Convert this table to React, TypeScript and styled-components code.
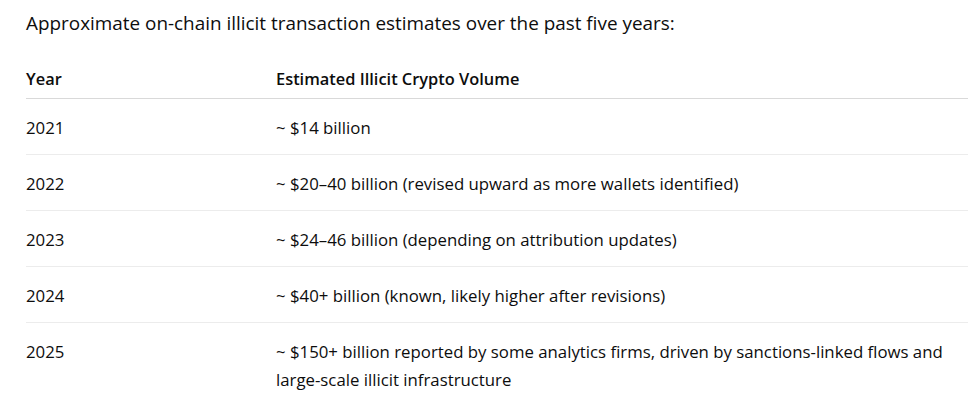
import React from "react";
import styled, { createGlobalStyle } from "styled-components";

const Global = createGlobalStyle`
  html, body { margin: 0; padding: 0; background: #ffffff; }
  body { font-family: "Open Sans", "Noto Sans", sans-serif; color: #0d0d0d; }
`;

const Page = styled.div`
  padding: 8px 0 0 26px;
  width: 968px;
  box-sizing: border-box;
`;

const Intro = styled.p`
  margin: 0 0 22px 0;
  font-size: 18.9px;
  line-height: 30px;
`;

const Table = styled.table`
  width: 100%;
  border-collapse: collapse;
  font-size: 16.8px;
  line-height: 28px;
`;

const Th = styled.th<{ $first?: boolean }>`
  text-align: left;
  font-weight: 600;
  font-size: 16.4px;
  padding: 5px 0 5px 0;
  width: ${(p) => (p.$first ? "250px" : "auto")};
  border-bottom: 1px solid #d9d9d9;
`;

const Td = styled.td`
  vertical-align: top;
  padding: 15px 0 12px 0;
`;

const Tr = styled.tr<{ $last?: boolean }>`
  border-bottom: ${(p) => (p.$last ? "none" : "1px solid #ececec")};
`;

const rows = [
  ["2021", "~ $14 billion"],
  ["2022", "~ $20–40 billion (revised upward as more wallets identified)"],
  ["2023", "~ $24–46 billion (depending on attribution updates)"],
  ["2024", "~ $40+ billion (known, likely higher after revisions)"],
  [
    "2025",
    "~ $150+ billion reported by some analytics firms, driven by sanctions-linked flows and large-scale illicit infrastructure",
  ],
];

export default function App() {
  return (
    <>
      <Global />
      <Page>
        <Intro>Approximate on-chain illicit transaction estimates over the past five years:</Intro>
        <Table>
          <thead>
            <tr>
              <Th $first>Year</Th>
              <Th>Estimated Illicit Crypto Volume</Th>
            </tr>
          </thead>
          <tbody>
            {rows.map(([y, v], i) => (
              <Tr key={y} $last={i === rows.length - 1}>
                <Td>{y}</Td>
                <Td>{v}</Td>
              </Tr>
            ))}
          </tbody>
        </Table>
      </Page>
    </>
  );
}
